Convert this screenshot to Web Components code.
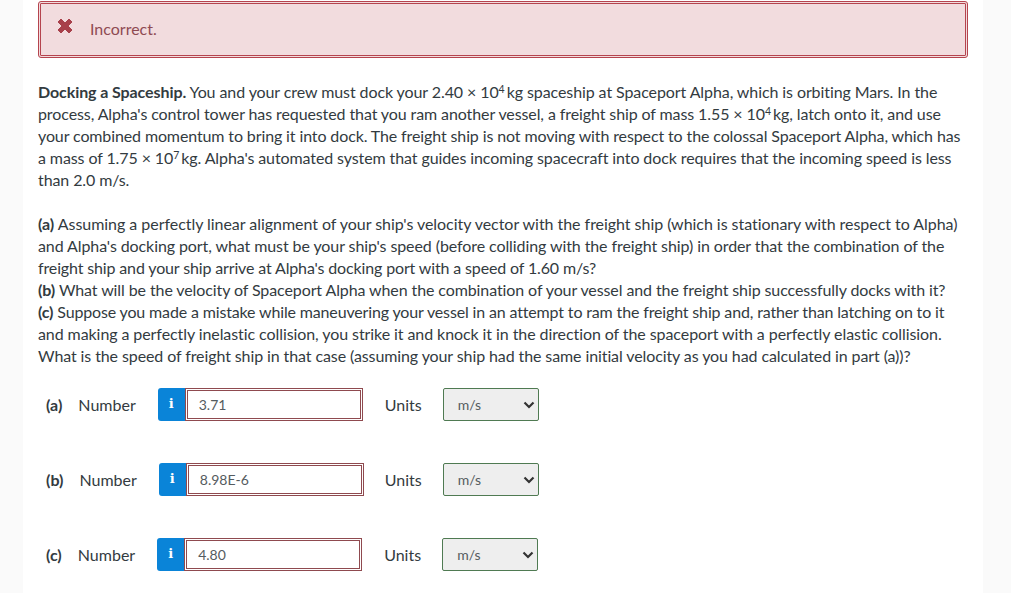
<!DOCTYPE html>
<html>
<head>
<meta charset="utf-8">
<title>Docking a Spaceship</title>
<style>
    html, body { margin: 0; height: 100%; background: #fafafa; overflow: hidden; }
    body { font-family: Lato, "Liberation Sans", sans-serif; font-size: 16px; color: #333b3f; }
    sup { font-size: 10.5px; line-height: 0; letter-spacing: 0; vertical-align: 5px; margin-right: -2px; }
</style>
</head>
<body>
<quiz-card>
    <alert-banner>Incorrect.</alert-banner>
    <question-text>
        <p><span style="letter-spacing:-.09px"><b>Docking a Spaceship.</b> You and your crew must dock your 2.40 × 10<sup>4</sup> kg spaceship at Spaceport Alpha, which is orbiting Mars. In the</span><br>
        <span style="letter-spacing:-.1px">process, Alpha's control tower has requested that you ram another vessel, a freight ship of mass 1.55 × 10<sup>4</sup> kg, latch onto it, and use</span><br>
        <span style="letter-spacing:-.12px">your combined momentum to bring it into dock. The freight ship is not moving with respect to the colossal Spaceport Alpha, which has</span><br>
        a mass of 1.75 × 10<sup>7</sup> kg. Alpha's automated system that guides incoming spacecraft into dock requires that the incoming speed is less<br>
        than 2.0 m/s.</p>
        <p><span style="letter-spacing:-.04px"><b>(a)</b> Assuming a perfectly linear alignment of your ship's velocity vector with the freight ship (which is stationary with respect to Alpha)</span><br>
        <span style="letter-spacing:-.09px">and Alpha's docking port, what must be your ship's speed (before colliding with the freight ship) in order that the combination of the</span><br>
        <span style="letter-spacing:-.14px">freight ship and your ship arrive at Alpha's docking port with a speed of 1.60 m/s?</span><br>
        <b>(b)</b> What will be the velocity of Spaceport Alpha when the combination of your vessel and the freight ship successfully docks with it?<br>
        <span style="letter-spacing:-.15px"><b>(c)</b> Suppose you made a mistake while maneuvering your vessel in an attempt to ram the freight ship and, rather than latching on to it</span><br>
        <span style="letter-spacing:-.08px">and making a perfectly inelastic collision, you strike it and knock it in the direction of the spaceport with a perfectly elastic collision.</span><br>
        What is the speed of freight ship in that case (assuming your ship had the same initial velocity as you had calculated in part (a))?</p>
    </question-text>
    <answer-row part-label="(a)" value="3.71" unit="m/s"></answer-row>
    <answer-row part-label="(b)" value="8.98E-6" unit="m/s" style="--units-gap: 21px"></answer-row>
    <answer-row part-label="(c)" value="4.80" unit="m/s"></answer-row>
</quiz-card>

<script>
class QuizCard extends HTMLElement {
    constructor() {
        super();
        this.attachShadow({ mode: 'open' });
        this.shadowRoot.innerHTML = `
            <style>
                :host {
                    display: flex;
                    flex-direction: column;
                    width: 930px;
                    height: 593px;
                    margin-left: 23px;
                    padding: 1px 15px 0;
                    box-sizing: content-box;
                    background: #fff;
                }
                ::slotted(*) { flex: none; }
            </style>
            <slot></slot>
        `;
    }
}

class AlertBanner extends HTMLElement {
    constructor() {
        super();
        this.attachShadow({ mode: 'open' });
        this.shadowRoot.innerHTML = `
            <style>
                :host {
                    display: flex;
                    align-items: center;
                    gap: 17px;
                    height: 57px;
                    box-sizing: border-box;
                    padding: 0 0 0 18px;
                    background: #f2dcde;
                    border: 1px solid #b5444e;
                    border-radius: 3px;
                    outline: 1px solid #b5444e;
                    outline-offset: -3px;
                    color: #8f4a52;
                }
                svg { width: 16px; height: 16px; margin-bottom: 7px; flex: none; }
                span { margin-bottom: 3px; }
            </style>
            <svg viewBox="0 0 16 16"><path d="M1 4 L4 1 L8 5 L12 1 L15 4 L11 8 L15 12 L12 15 L8 11 L4 15 L1 12 L5 8 Z" fill="#a8404a" stroke="#a8404a" stroke-width="1" stroke-linejoin="round"/></svg>
            <span><slot></slot></span>
        `;
    }
}

class QuestionText extends HTMLElement {
    constructor() {
        super();
        this.attachShadow({ mode: 'open' });
        this.shadowRoot.innerHTML = `
            <style>
                :host {
                    display: block;
                    margin-top: 23px;
                    margin-bottom: -1px;
                    line-height: 22px;
                    letter-spacing: -0.1px;
                    white-space: nowrap;
                }
                ::slotted(p) { margin: 0 0 22px; }
            </style>
            <slot></slot>
        `;
    }
}

class AnswerRow extends HTMLElement {
    constructor() {
        super();
        this.attachShadow({ mode: 'open' });
        this.shadowRoot.innerHTML = `
            <style>
                :host {
                    display: flex;
                    align-items: center;
                    height: 33px;
                    margin: 0 0 42px 8px;
                }
                b { font-weight: 700; margin-right: 16px; }
                .num { margin-right: 22px; }
                .info {
                    width: 27px;
                    height: 33px;
                    background: #0a84d8;
                    border-radius: 3px 0 0 3px;
                    color: #fff;
                    font: bold 13px "DejaVu Serif", serif;
                    display: flex;
                    align-items: center;
                    justify-content: center;
                    padding-bottom: 2px;
                    box-sizing: border-box;
                }
                .field {
                    width: 178px;
                    height: 33px;
                    box-sizing: border-box;
                    border: 1px solid #8f4a4f;
                    outline: 1px solid #8f4a4f;
                    outline-offset: -3px;
                    padding-left: 13px;
                    display: flex;
                    align-items: center;
                    color: #555c60;
                    font-size: 14px;
                }
                .units { margin: 0 21px 0 var(--units-gap, 22px); }
                .select {
                    width: 96px;
                    height: 33px;
                    box-sizing: border-box;
                    border: 1px solid #4f7a52;
                    border-radius: 2px;
                    background: #eeeeee;
                    display: flex;
                    align-items: center;
                    justify-content: space-between;
                    padding: 0 3px 0 14px;
                    font-size: 14px;
                    color: #555c60;
                }
                svg { width: 12px; height: 12px; }
            </style>
            <b></b><span class="num">Number</span>
            <span class="info">i</span>
            <span class="field"></span>
            <span class="units">Units</span>
            <span class="select">
                <span class="unit"></span>
                <svg viewBox="0 0 12 12"><path d="M1.5 3.5 L6 8 L10.5 3.5" fill="none" stroke="#333" stroke-width="2.2"/></svg>
            </span>
        `;
    }

    connectedCallback() {
        this.shadowRoot.querySelector('b').textContent = this.getAttribute('part-label');
        this.shadowRoot.querySelector('.field').textContent = this.getAttribute('value');
        this.shadowRoot.querySelector('.unit').textContent = this.getAttribute('unit');
    }
}

customElements.define('quiz-card', QuizCard);
customElements.define('alert-banner', AlertBanner);
customElements.define('question-text', QuestionText);
customElements.define('answer-row', AnswerRow);
</script>
</body>
</html>
